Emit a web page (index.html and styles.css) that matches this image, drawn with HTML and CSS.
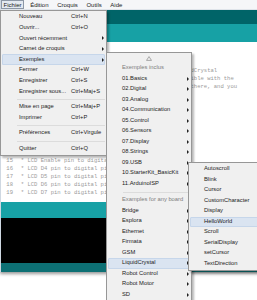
FILE: index.html
```html
<!DOCTYPE html>
<html lang="fr">
<head>
<meta charset="utf-8">
<title>Arduino - Exemples</title>
<link rel="stylesheet" href="styles.css">
</head>
<body>
<div class="app">
  <div class="menubar">
    <span class="mb active">Fichier</span>
    <span class="mb">Édition</span>
    <span class="mb">Croquis</span>
    <span class="mb">Outils</span>
    <span class="mb">Aide</span>
  </div>
  <div class="toolbar"></div>
  <div class="tabs"></div>
  <div class="editor">
    <div class="ln"><span class="no">1</span><span class="tx"></span></div>
    <div class="ln"><span class="no">2</span><span class="tx"></span></div>
    <div class="ln"><span class="no">3</span><span class="tx"></span></div>
    <div class="ln"><span class="no">4</span><span class="tx"> Demonstrates the use a 16x2 LCD display.  The LiquidCrystal</span></div>
    <div class="ln"><span class="no">5</span><span class="tx"> library works with all LCD displays that are compatible with the</span></div>
    <div class="ln"><span class="no">6</span><span class="tx"> Hitachi HD44780 driver. There are many of them out there, and you</span></div>
    <div class="ln"><span class="no">7</span><span class="tx"></span></div>
    <div class="ln"><span class="no">8</span><span class="tx"></span></div>
    <div class="ln"><span class="no">9</span><span class="tx"></span></div>
    <div class="ln"><span class="no">10</span><span class="tx"></span></div>
    <div class="ln"><span class="no">11</span><span class="tx"></span></div>
    <div class="ln"><span class="no">12</span><span class="tx"></span></div>
    <div class="ln"><span class="no">13</span><span class="tx"></span></div>
    <div class="ln"><span class="no">14</span><span class="tx"> * LCD RS pin to digital pin 12</span></div>
    <div class="ln"><span class="no">15</span><span class="tx"> * LCD Enable pin to digital pin 11</span></div>
    <div class="ln"><span class="no">16</span><span class="tx"> * LCD D4 pin to digital pin 5</span></div>
    <div class="ln"><span class="no">17</span><span class="tx"> * LCD D5 pin to digital pin 4</span></div>
    <div class="ln"><span class="no">18</span><span class="tx"> * LCD D6 pin to digital pin 3</span></div>
    <div class="ln"><span class="no">19</span><span class="tx"> * LCD D7 pin to digital pin 2</span></div>
  </div>
  <div class="status"></div>
  <div class="console"></div>
  <div class="linebar"></div>
</div>

<div class="menu m-fichier">
  <div class="row"><span class="lbl">Nouveau</span><span class="key">Ctrl+N</span></div>
  <div class="row"><span class="lbl">Ouvrir...</span><span class="key">Ctrl+O</span></div>
  <div class="row"><span class="lbl">Ouvert récemment</span><i class="arr"></i></div>
  <div class="row"><span class="lbl">Carnet de croquis</span><i class="arr"></i></div>
  <div class="row hl"><span class="lbl">Exemples</span><i class="arr"></i></div>
  <div class="row"><span class="lbl">Fermer</span><span class="key">Ctrl+W</span></div>
  <div class="row"><span class="lbl">Enregistrer</span><span class="key">Ctrl+S</span></div>
  <div class="row"><span class="lbl">Enregistrer sous...</span><span class="key">Ctrl+Maj+S</span></div>
  <div class="sep"></div>
  <div class="row"><span class="lbl">Mise en page</span><span class="key">Ctrl+Maj+P</span></div>
  <div class="row"><span class="lbl">Imprimer</span><span class="key">Ctrl+P</span></div>
  <div class="sep"></div>
  <div class="row"><span class="lbl">Préférences</span><span class="key">Ctrl+Virgule</span></div>
  <div class="sep"></div>
  <div class="row"><span class="lbl">Quitter</span><span class="key">Ctrl+Q</span></div>
</div>

<div class="menu m-ex">
  <div class="scroll-up">
    <svg width="6" height="5" viewBox="0 0 6 5"><path d="M3 0.6 L5.5 4.4 L0.5 4.4 Z" fill="none" stroke="#8a8a8a" stroke-width="0.7"/></svg>
  </div>
  <div class="row head"><span class="lbl">Exemples inclus</span></div>
  <div class="row"><span class="lbl">01.Basics</span><i class="arr"></i></div>
  <div class="row"><span class="lbl">02.Digital</span><i class="arr"></i></div>
  <div class="row"><span class="lbl">03.Analog</span><i class="arr"></i></div>
  <div class="row"><span class="lbl">04.Communication</span><i class="arr"></i></div>
  <div class="row"><span class="lbl">05.Control</span><i class="arr"></i></div>
  <div class="row"><span class="lbl">06.Sensors</span><i class="arr"></i></div>
  <div class="row"><span class="lbl">07.Display</span><i class="arr"></i></div>
  <div class="row"><span class="lbl">08.Strings</span><i class="arr"></i></div>
  <div class="row"><span class="lbl">09.USB</span><i class="arr"></i></div>
  <div class="row"><span class="lbl">10.StarterKit_BasicKit</span><i class="arr"></i></div>
  <div class="row"><span class="lbl">11.ArduinoISP</span><i class="arr"></i></div>
  <div class="sep"></div>
  <div class="row head"><span class="lbl">Examples for any board</span></div>
  <div class="row"><span class="lbl">Bridge</span><i class="arr"></i></div>
  <div class="row"><span class="lbl">Esplora</span><i class="arr"></i></div>
  <div class="row"><span class="lbl">Ethernet</span><i class="arr"></i></div>
  <div class="row"><span class="lbl">Firmata</span><i class="arr"></i></div>
  <div class="row"><span class="lbl">GSM</span><i class="arr"></i></div>
  <div class="row hl"><span class="lbl">LiquidCrystal</span><i class="arr"></i></div>
  <div class="row"><span class="lbl">Robot Control</span><i class="arr"></i></div>
  <div class="row"><span class="lbl">Robot Motor</span><i class="arr"></i></div>
  <div class="row"><span class="lbl">SD</span><i class="arr"></i></div>
  <div class="row"></div>
</div>

<div class="menu m-lc">
  <div class="row"><span class="lbl">Autoscroll</span></div>
  <div class="row"><span class="lbl">Blink</span></div>
  <div class="row"><span class="lbl">Cursor</span></div>
  <div class="row"><span class="lbl">CustomCharacter</span></div>
  <div class="row"><span class="lbl">Display</span></div>
  <div class="row hl"><span class="lbl">HelloWorld</span></div>
  <div class="row"><span class="lbl">Scroll</span></div>
  <div class="row"><span class="lbl">SerialDisplay</span></div>
  <div class="row"><span class="lbl">setCursor</span></div>
  <div class="row"><span class="lbl">TextDirection</span></div>
</div>
</body>
</html>
```
FILE: styles.css
```css
* { box-sizing: border-box; }

html, body {
  margin: 0;
  padding: 0;
}

body {
  position: relative;
  width: 257px;
  height: 300px;
  overflow: hidden;
  background: #ffffff;
  font-family: "Liberation Sans", Arial, sans-serif;
  color: #1b1b1b;
}

/* ---------- IDE window ---------- */
.app {
  display: flex;
  flex-direction: column;
  width: 262px;
  border-left: 1px solid #cfd8e2;
  box-shadow: 0 2px 3px rgba(0, 0, 0, 0.4);
}

.menubar {
  height: 10px;
  display: flex;
  align-items: stretch;
  gap: 3.4px;
  background: #f5f6f8;
  border-bottom: 1px solid #dfe4ea;
  font-size: 6px;
  line-height: 8px;
}

.mb {
  padding: 0 1.6px;
  border: 1px solid transparent;
  white-space: nowrap;
}

.mb.active {
  border-color: #8c97a6;
  background: #e3e9f1;
}

.toolbar {
  height: 14px;
  background: #006468;
}

.tabs {
  height: 18px;
  background: #17a1a5;
}

.editor {
  height: 160px;
  display: flex;
  flex-direction: column;
  overflow: hidden;
  background: #ffffff;
  font-family: "Liberation Mono", "Courier New", monospace;
  font-size: 5.55px;
  color: #9a9a9a;
}

.ln {
  height: 8.17px;
  flex: none;
  display: flex;
  align-items: center;
  white-space: pre;
}

.no {
  width: 12px;
  flex: none;
  text-align: right;
}

.tx {
  margin-left: 4.4px;
}

.status {
  height: 16px;
  background: #17a1a5;
}

.console {
  height: 44.5px;
  background: #000000;
}

.linebar {
  height: 9.5px;
  background: #0d7074;
}

/* ---------- popup menus ---------- */
.menu {
  position: absolute;
  padding: 1px;
  background: #f0f0f0;
  border: 1px solid #979797;
  box-shadow: 2px 2px 2px rgba(0, 0, 0, 0.28);
  font-size: 5.8px;
  line-height: 1;
}

.row {
  height: 10.5px;
  display: flex;
  align-items: center;
  white-space: nowrap;
}

.row.hl {
  background: #dae4f1;
  box-shadow: inset 0 0 0 1px #c6d6ea;
  border-radius: 1.5px;
}

.row.head {
  color: #7d7d7d;
}

.arr {
  margin-left: auto;
  margin-right: 1.2px;
  width: 0;
  height: 0;
  border-left: 2.4px solid #222;
  border-top: 2px solid transparent;
  border-bottom: 2px solid transparent;
}

.sep {
  height: 5px;
  display: flex;
  align-items: center;
  padding-left: 15px;
}

.sep::after {
  content: "";
  flex: 1;
  height: 1px;
  background: #dcdcdc;
}

/* Fichier */
.m-fichier {
  left: 0;
  top: 10px;
  width: 107px;
}

.m-fichier .row {
  height: 10.6px;
}

.m-fichier .lbl {
  width: 69px;
  padding-left: 17px;
}

/* Exemples */
.m-ex {
  left: 106px;
  top: 52px;
  width: 86px;
}

.m-ex .lbl {
  padding-left: 14px;
}

.m-ex .sep {
  height: 6px;
}

.scroll-up {
  height: 9px;
  display: flex;
  align-items: center;
  justify-content: center;
}

.scroll-up svg {
  display: block;
}

/* LiquidCrystal */
.m-lc {
  left: 188px;
  top: 162px;
  width: 74px;
}

.m-lc .lbl {
  padding-left: 14px;
}
```
